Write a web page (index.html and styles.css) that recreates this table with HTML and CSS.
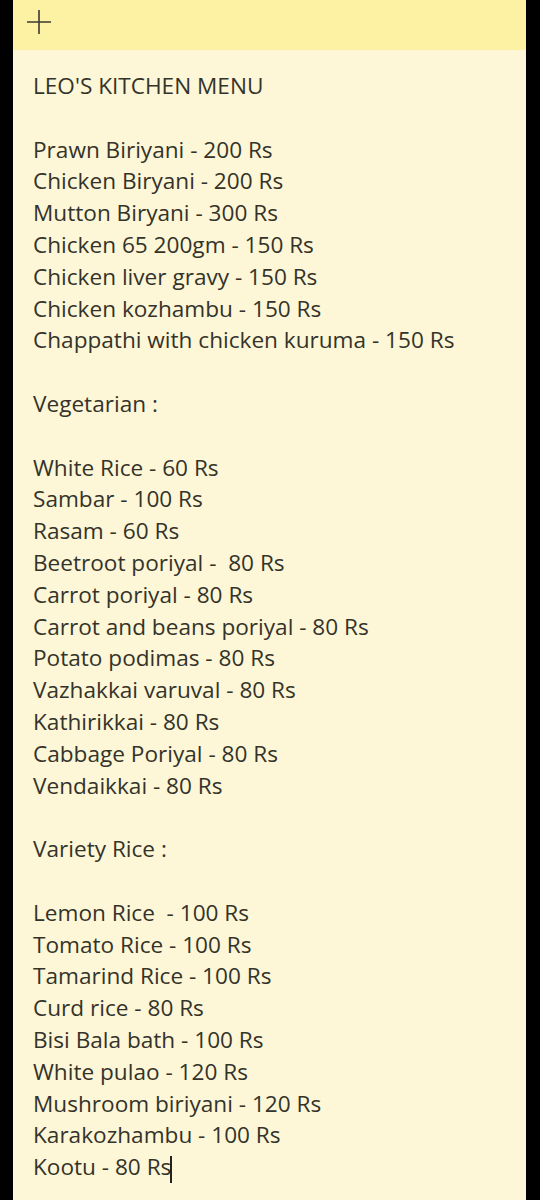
FILE: index.html
```html
<!DOCTYPE html>
<html>
<head>
<meta charset="utf-8">
<link rel="stylesheet" href="styles.css">
</head>
<body>
<div class="note">
  <div class="header">
    <svg class="plus" width="26" height="26" viewBox="0 0 26 26"><path d="M13 1V25M1 13H25" stroke="#3d3a2c" stroke-width="1.6" fill="none"/></svg>
  </div>
  <div class="content">
    <p>LEO'S KITCHEN MENU</p>
    <p class="blank"></p>
    <p>Prawn Biriyani - 200 Rs</p>
    <p>Chicken Biryani - 200 Rs</p>
    <p>Mutton Biryani - 300 Rs</p>
    <p>Chicken 65 200gm - 150 Rs</p>
    <p>Chicken liver gravy - 150 Rs</p>
    <p>Chicken kozhambu - 150 Rs</p>
    <p>Chappathi with chicken kuruma - 150 Rs</p>
    <p class="blank"></p>
    <p>Vegetarian :</p>
    <p class="blank"></p>
    <p>White Rice - 60 Rs</p>
    <p>Sambar - 100 Rs</p>
    <p>Rasam - 60 Rs</p>
    <p>Beetroot poriyal -  80 Rs</p>
    <p>Carrot poriyal - 80 Rs</p>
    <p>Carrot and beans poriyal - 80 Rs</p>
    <p>Potato podimas - 80 Rs</p>
    <p>Vazhakkai varuval - 80 Rs</p>
    <p>Kathirikkai - 80 Rs</p>
    <p>Cabbage Poriyal - 80 Rs</p>
    <p>Vendaikkai - 80 Rs</p>
    <p class="blank"></p>
    <p>Variety Rice :</p>
    <p class="blank"></p>
    <p>Lemon Rice  - 100 Rs</p>
    <p>Tomato Rice - 100 Rs</p>
    <p>Tamarind Rice - 100 Rs</p>
    <p>Curd rice - 80 Rs</p>
    <p>Bisi Bala bath - 100 Rs</p>
    <p>White pulao - 120 Rs</p>
    <p>Mushroom biriyani - 120 Rs</p>
    <p>Karakozhambu - 100 Rs</p>
    <p>Kootu - 80 Rs<span class="caret"></span></p>
  </div>
</div>
</body>
</html>
```
FILE: styles.css
```css
html, body {
  margin: 0;
  padding: 0;
  background: #000;
}
.note {
  margin: 0 14px 0 13px;
  min-height: 1200px;
  background: #fdf7d7;
}
.header {
  height: 50px;
  background: #fdf1a4;
  display: flex;
  align-items: flex-start;
  padding: 9px 0 0 13px;
  box-sizing: border-box;
}
.plus {
  display: block;
}
.content {
  padding: 20px 0 0 20px;
  font-family: "Open Sans", "Noto Sans", sans-serif;
  font-size: 22.6px;
  color: #34332a;
}
.content p {
  margin: 0;
  height: 31.8px;
  line-height: 31.8px;
  white-space: pre;
}
.caret {
  display: inline-block;
  width: 2px;
  height: 27px;
  background: #222;
  vertical-align: middle;
  margin-left: -1px;
}
```
